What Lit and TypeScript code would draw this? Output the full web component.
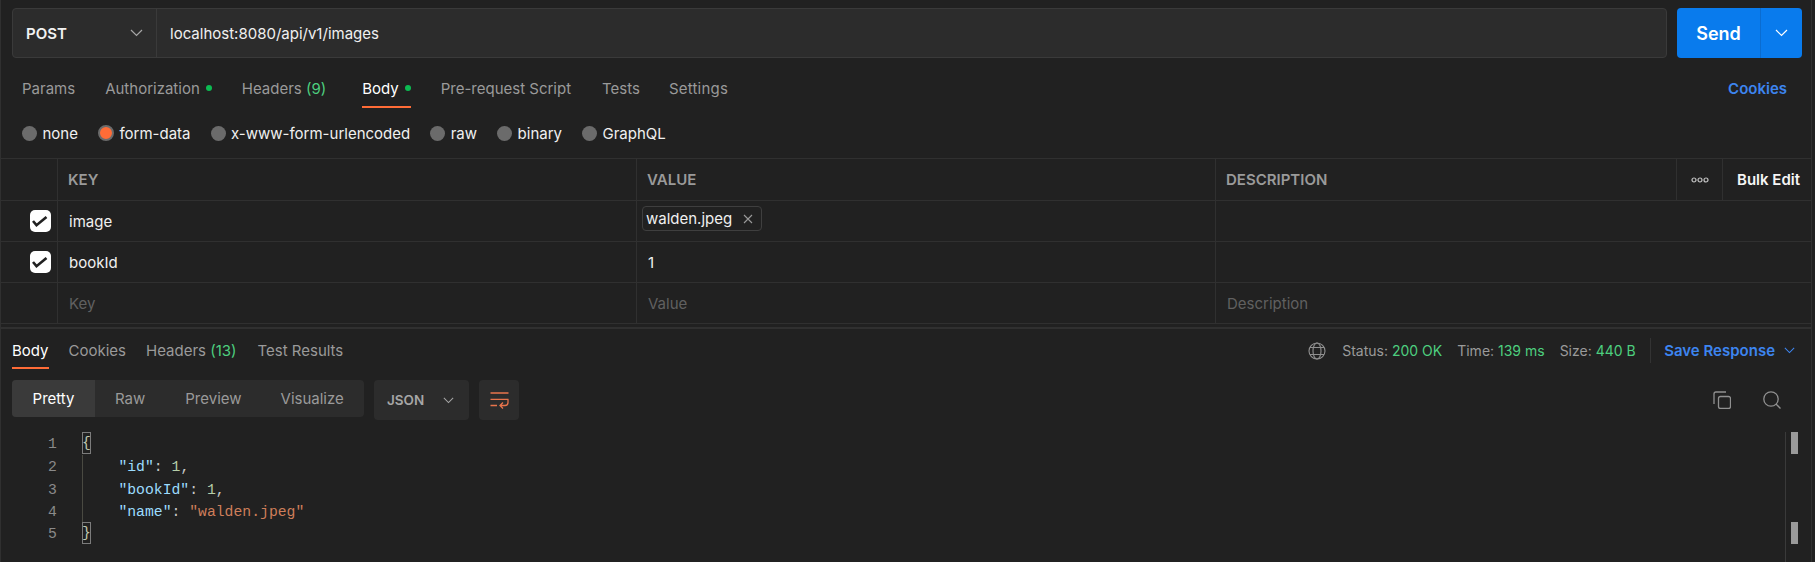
import { LitElement, html, css, svg } from "lit";
import { customElement } from "lit/decorators.js";

const chevron = svg`<path d="M1 1l5.5 5.5L12 1" fill="none" stroke="currentColor" stroke-width="1.2"/>`;

@customElement("app-root")
export class AppRoot extends LitElement {
  static styles = css`
    :host {
      display: block;
      width: 1815px;
      height: 562px;
      overflow: hidden;
      background: #212121;
      color: #fff;
      font-family: Inter, "Liberation Sans", sans-serif;
      font-size: 15px;
      box-sizing: border-box;
    }
    * { box-sizing: border-box; }
    .page { display: flex; flex-direction: column; height: 562px; width: 1812px; border-right: 1px solid #303030; border-left: 1px solid #303030; }
    .req { display: flex; gap: 10px; margin: 8px 9px 0 11px; height: 50px; }
    .urlbar { flex: 1; display: flex; background: #2c2c2c; border: 1px solid #3a3a3a; border-radius: 4px; }
    .method { width: 144px; display: flex; align-items: center; justify-content: space-between; padding: 0 13px 0 13px; border-right: 1px solid #3a3a3a; font-weight: 600; color: #f2f2f2; }
    .method svg { color: #a6a6a6; }
    .url { padding-left: 13px; display: flex; align-items: center; color: #f0f0f0; }
    .send { width: 125px; display: flex; background: #097bed; border-radius: 4px; font-weight: 600; font-size: 18px; }
    .send-l { width: 84px; display: flex; align-items: center; justify-content: center; border-right: 1px solid #0a6cd0; }
    .send-r { flex: 1; display: flex; align-items: center; justify-content: center; }
    .tabs { display: flex; margin: 0 24px 0 21px; height: 50px; align-items: stretch; gap: 30px; color: #9a9a9a; }
    .tab { display: flex; align-items: center; gap: 5px; border-bottom: 2px solid transparent; padding-top: 12px; height: 50px; }
    .tab.on { color: #fff; border-bottom-color: #ff6c37; margin-left: 6px; }
    .tab.tests { margin-left: 1px; }
    .tab.settings { margin-left: -1px; letter-spacing: 0.2px; }
    .dot { width: 6px; height: 6px; border-radius: 50%; background: #0cbb52; margin-left: 1px; }
    .green { color: #4dcf7f; }
    .cookies { margin-left: auto; align-self: center; color: #3d85f0; font-weight: 600; padding-top: 10px; }
    .radios { display: flex; height: 50px; padding: 0 0 0 21px; align-items: center; gap: 20px; color: #f0f0f0; }
    .radio { display: flex; align-items: center; gap: 5.5px; }
    .rc { width: 15px; height: 15px; border-radius: 50%; background: #6b6b6b; }
    .rc.on { width: 16px; height: 16px; background: #ff6c37; border: 2px solid #6b6b6b; }
    .table { display: grid; grid-template-columns: 57px 579px 579px 461px 46px 1fr; grid-template-rows: 42px 41px 41px 41px; border-top: 1px solid #303030; }
    .cell { display: flex; align-items: center; padding-left: 11px; border-right: 1px solid #303030; border-bottom: 1px solid #303030; color: #f0f0f0; min-width: 0; }
    .cell.last { border-right: 0; }
    .cell.h { color: #9a9a9a; font-weight: 600; padding-left: 10px; }
    .cell.ph { color: #606060; }
    .cell.chk { padding-left: 29px; }
    .cell.h.bulk { color: #f5f5f5; font-weight: 600; padding-left: 14px; }
    .cell.h.dots { padding: 0; justify-content: center; }
    .cell.chipc { padding-left: 5px; }
    .box { width: 21px; height: 22px; border-radius: 5px; background: #fff; display: flex; align-items: center; justify-content: center; }
    .chip { display: flex; align-items: center; gap: 11px; height: 25px; width: 120px; padding: 0 3px; border: 1px solid #3f3f3f; border-radius: 4px; margin-top: -5px; }
    .chip svg { color: #9a9a9a; }
    .resp { flex: 1; margin-top: 3px; border-top: 2px solid #303030; display: flex; flex-direction: column; min-height: 0; }
    .rtabs { display: flex; height: 40px; margin-left: 11px; gap: 20px; color: #9a9a9a; }
    .rtab { display: flex; align-items: center; height: 40px; border-bottom: 2px solid transparent; padding-top: 4px; }
    .rtab.on { color: #fff; border-bottom-color: #ff6c37; }
    .rtab.last { margin-left: 1px; }
    .status { margin-left: auto; display: flex; align-items: center; gap: 12px; padding: 3px 16px 0 0; font-size: 14px; }
    .globe { display: block; margin-right: 4px; color: #909090; }
    .stat { margin-left: 3px; }
    .lbl { color: #9a9a9a; }
    .sep { width: 1px; height: 25px; background: #333; margin: 0 1.5px 0 2px; }
    .save { color: #3d85f0; font-weight: 600; font-size: 15px; }
    .save-c { color: #3d85f0; margin-left: -3px; display: block; }
    .tools { display: flex; margin: 11px 0 0 11px; gap: 10px; align-items: flex-start; height: 40px; }
    .seg { display: flex; width: 352px; height: 37px; border-radius: 4px; background: #2c2c2c; color: #9a9a9a; align-items: center; }
    .seg span { display: block; }
    .seg .a { width: 83px; height: 37px; display: flex; align-items: center; justify-content: center; background: #3a3a3a; color: #fff; border-radius: 4px 0 0 4px; }
    .seg .r { margin-left: 20px; }
    .seg .p { margin-left: 40px; }
    .seg .v { margin-left: 39px; }
    .json { width: 95px; height: 40px; border-radius: 4px; background: #2c2c2c; display: flex; align-items: center; justify-content: space-between; padding: 0 15px 0 13px; color: #a6a6a6; font-weight: 600; font-size: 13.5px; }
    .wrap { width: 40px; height: 40px; border-radius: 4px; background: #2c2c2c; display: flex; align-items: center; justify-content: center; color: #e8744c; }
    .wrap svg { display: block; margin-top: 1px; }
    .ticons { margin-left: auto; display: flex; gap: 32px; padding: 11px 30px 0 0; color: #909090; }
    .ticons svg { display: block; }
    .code { flex: 1; display: flex; margin-top: 12px; min-height: 0; }
    .lines { flex: 1; font-family: "Liberation Mono", monospace; font-size: 14.75px; line-height: 22.6px; }
    .ln { display: flex; height: 22.6px; padding-top: 1px; }
    .num { padding-left: 47px; width: 81px; color: #8a8a8a; }
    .txt { white-space: pre; flex: 1; color: #e0e0e0; }
    .ln.ind { padding-top: 0; }
    .ln.ind .num, .ln.ind .code-t { padding-top: 1.5px; }
    .ln.ind .txt { box-shadow: inset 1px 0 0 #4a4a42; padding-left: 1px; padding-top: 1.5px; }
    .br { display: block; width: 9px; height: 22px; border: 1px solid #7c7c7c; color: #bfc8b0; line-height: 20px; text-indent: -1px; overflow: hidden; margin-top: -1px; }
    .k { color: #9cdcfe; }
    .n { color: #b5cea8; }
    .s { color: #ce7e5a; }
    .p2 { color: #c8c8c8; }
    .sb { width: 26px; border-left: 1px solid #3a3a3a; display: flex; flex-direction: column; padding-left: 5px; }
    .th { width: 7px; height: 22px; background: #9a9a9a; }
    .th + .th { margin-top: 68px; }
  `;

  render() {
    const check = html`<div class="box"><svg width="21" height="22" viewBox="0 0 21 22"><path d="M3 11l3.5 4.2L16.5 7" fill="none" stroke="#212121" stroke-width="2.6"/></svg></div>`;
    return html`<div class="page">
      <div class="req">
        <div class="urlbar">
          <div class="method"><span>POST</span><svg width="13" height="8" viewBox="0 0 13 8">${chevron}</svg></div>
          <div class="url">localhost:8080/api/v1/images</div>
        </div>
        <div class="send">
          <div class="send-l">Send</div>
          <div class="send-r"><svg width="13" height="8" viewBox="0 0 13 8">${chevron}</svg></div>
        </div>
      </div>
      <div class="tabs">
        <div class="tab">Params</div>
        <div class="tab">Authorization<i class="dot"></i></div>
        <div class="tab"><span>Headers <span class="green">(9)</span></span></div>
        <div class="tab on">Body<i class="dot"></i></div>
        <div class="tab">Pre-request Script</div>
        <div class="tab tests">Tests</div>
        <div class="tab settings">Settings</div>
        <div class="cookies">Cookies</div>
      </div>
      <div class="radios">
        ${["none", "form-data", "x-www-form-urlencoded", "raw", "binary", "GraphQL"].map(
          (t, i) => html`<div class="radio"><i class="rc ${i === 1 ? "on" : ""}"></i>${t}</div>`
        )}
      </div>
      <div class="table">
        <div class="cell h"></div><div class="cell h">KEY</div><div class="cell h">VALUE</div><div class="cell h">DESCRIPTION</div>
        <div class="cell h dots"><svg width="18" height="6" viewBox="0 0 18 6" fill="none" stroke="#c4c4c4" stroke-width="1.2"><circle cx="3" cy="3" r="2"/><circle cx="9" cy="3" r="2"/><circle cx="15" cy="3" r="2"/></svg></div>
        <div class="cell h bulk last">Bulk Edit</div>

        <div class="cell chk">${check}</div><div class="cell">image</div>
        <div class="cell chipc"><div class="chip">walden.jpeg<svg width="10" height="10" viewBox="0 0 10 10"><path d="M1 1l8 8M9 1l-8 8" stroke="currentColor" stroke-width="1.1"/></svg></div></div>
        <div class="cell last" style="grid-column: span 3"></div>

        <div class="cell chk">${check}</div><div class="cell">bookId</div><div class="cell">1</div>
        <div class="cell last" style="grid-column: span 3"></div>

        <div class="cell ph"></div><div class="cell ph">Key</div><div class="cell ph">Value</div>
        <div class="cell ph last" style="grid-column: span 3">Description</div>
      </div>
      <div class="resp">
        <div class="rtabs">
          <div class="rtab on">Body</div>
          <div class="rtab">Cookies</div>
          <div class="rtab"><span>Headers <span class="green">(13)</span></span></div>
          <div class="rtab last">Test Results</div>
          <div class="status">
            <svg class="globe" width="18" height="18" viewBox="0 0 18 18" fill="none" stroke="currentColor" stroke-width="1.1"><circle cx="9" cy="9" r="8"/><ellipse cx="9" cy="9" rx="4" ry="8"/><path d="M2 5.5h14M2 12.5h14"/></svg>
            <span><span class="lbl">Status:</span> <span class="green">200 OK</span></span>
            <span class="stat"><span class="lbl">Time:</span> <span class="green">139 ms</span></span>
            <span class="stat"><span class="lbl">Size:</span> <span class="green">440 B</span></span>
            <i class="sep"></i>
            <span class="save">Save Response</span>
            <svg class="save-c" width="11" height="7" viewBox="0 0 13 8">${chevron}</svg>
          </div>
        </div>
        <div class="tools">
          <div class="seg"><span class="a">Pretty</span><span class="r">Raw</span><span class="p">Preview</span><span class="v">Visualize</span></div>
          <div class="json"><span>JSON</span><svg width="11" height="7" viewBox="0 0 13 8">${chevron}</svg></div>
          <div class="wrap"><svg width="19" height="17" viewBox="0 0 19 17" fill="none" stroke="currentColor" stroke-width="1.3"><path d="M0.5 1h18M0.5 7.3h18M0.5 13.5h6.5M18 7.3v3.2a3 3 0 0 1-3 3H10M13 10.5l-3 3 3 3"/></svg></div>
          <div class="ticons">
            <svg width="18" height="18" viewBox="0 0 18 18" fill="none" stroke="currentColor" stroke-width="1.3"><rect x="5.5" y="5.5" width="12" height="12" rx="2"/><path d="M1 13V3a2 2 0 0 1 2-2h10"/></svg>
            <svg width="18" height="18" viewBox="0 0 18 18" fill="none" stroke="currentColor" stroke-width="1.3"><circle cx="8" cy="8" r="7.2"/><path d="M13 13l4.5 4.5"/></svg>
          </div>
        </div>
        <div class="code">
          <div class="lines">
            <div class="ln"><div class="num">1</div><div class="txt"><span class="br">{</span></div></div>
            <div class="ln ind"><div class="num">2</div><div class="txt">    <span class="k">"id"</span><span class="p2">: </span><span class="n">1</span><span class="p2">,</span></div></div>
            <div class="ln ind"><div class="num">3</div><div class="txt">    <span class="k">"bookId"</span><span class="p2">: </span><span class="n">1</span><span class="p2">,</span></div></div>
            <div class="ln ind"><div class="num">4</div><div class="txt">    <span class="k">"name"</span><span class="p2">: </span><span class="s">"walden.jpeg"</span></div></div>
            <div class="ln"><div class="num">5</div><div class="txt"><span class="br">}</span></div></div>
          </div>
          <div class="sb"><div class="th"></div><div class="th"></div></div>
        </div>
      </div>
    </div>`;
  }
}
